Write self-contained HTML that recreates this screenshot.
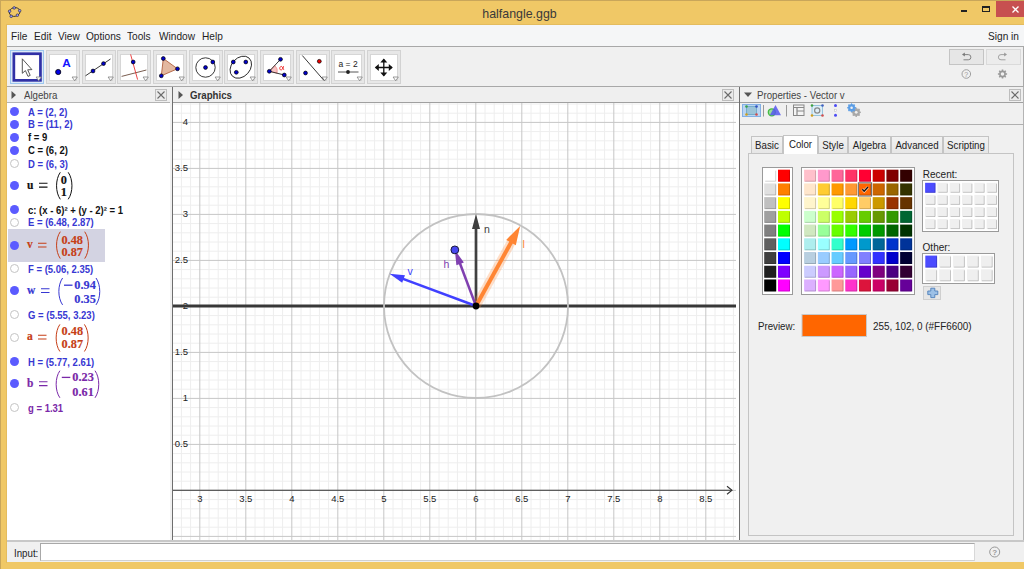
<!DOCTYPE html><html><head><meta charset="utf-8"><style>
*{margin:0;padding:0;box-sizing:border-box}
html,body{width:1024px;height:569px;overflow:hidden}
body{position:relative;background:#f0c866;font-family:"Liberation Sans",sans-serif;color:#000}
.a{position:absolute}
.t{position:absolute;white-space:nowrap;line-height:1}
.sx{transform-origin:0 0;transform:scaleX(.88)}
.menu{top:31px;font-size:11.5px;color:#1e1e1e}
.tb{position:absolute;top:50px;width:34px;height:34px;background:#e2e2e2;border:1px solid #d2d2d2}
.tb .in{position:absolute;left:3px;top:3px;width:26px;height:26px;background:#fff;border:1px solid #e4e4e4}
.tb svg{position:absolute;left:0;top:0}
.hdr{position:absolute;top:87px;height:16px;background:#efefef}
.alg{position:absolute;font-size:10.5px;font-weight:bold;line-height:1;white-space:nowrap}
.dot{position:absolute;left:10px;width:10px;height:10px;border-radius:50%}
.don{background:#5a5af5}
.doff{background:#fff;border:1px solid #c8c8c8}
</style></head><body>
<div class="a" style="left:0;top:0;width:1024px;height:1px;background:#c9a65a"></div>
<div class="a" style="left:0;top:0;width:1px;height:569px;background:#c9a65a"></div>
<div class="a" style="left:6px;top:24px;width:1018px;height:1px;background:#e4bc5e"></div>
<div class="a" style="left:6px;top:24px;width:1px;height:539px;background:#e4bc5e"></div>
<svg class="a" style="left:7px;top:5px" width="16" height="14"><ellipse cx="7.6" cy="7" rx="5.4" ry="4.4" transform="rotate(-10 7.6 7)" fill="none" stroke="#333" stroke-width="0.9"/><circle cx="7.2" cy="2.9" r="1.3" fill="#99f" stroke="#223" stroke-width="0.6"/><circle cx="12.7" cy="5.7" r="1.3" fill="#99f" stroke="#223" stroke-width="0.6"/><circle cx="10.4" cy="10.2" r="1.3" fill="#99f" stroke="#223" stroke-width="0.6"/><circle cx="4.2" cy="11.3" r="1.3" fill="#99f" stroke="#223" stroke-width="0.6"/><circle cx="2.6" cy="6.2" r="1.3" fill="#99f" stroke="#223" stroke-width="0.6"/></svg>
<div class="t" style="left:7.5px;top:7.6px;width:1024px;text-align:center;font-size:12.4px;color:#3a3a3a">halfangle.ggb</div>
<div class="a" style="left:961px;top:10px;width:6px;height:2px;background:#222"></div>
<div class="a" style="left:982px;top:6px;width:8px;height:6px;border:1px solid #222;border-top-width:2px"></div>
<div class="a" style="left:996px;top:1px;width:28px;height:16px;background:#c75050"></div>
<svg class="a" style="left:1011px;top:5px" width="9" height="9"><path d="M1.5 1.5L7.5 7.5M7.5 1.5L1.5 7.5" stroke="#fff" stroke-width="1.3"/></svg>
<div class="a" style="left:7px;top:25px;width:1017px;height:537px;background:#f0f0f0"></div>
<div class="a" style="left:7px;top:25px;width:1017px;height:21px;background:#f5f6f7"></div>
<div class="a" style="left:7px;top:46px;width:1017px;height:1px;background:#a8a8a8"></div>
<div class="t menu sx" style="left:11px">File</div>
<div class="t menu sx" style="left:34px">Edit</div>
<div class="t menu sx" style="left:58px">View</div>
<div class="t menu sx" style="left:86px">Options</div>
<div class="t menu sx" style="left:127px">Tools</div>
<div class="t menu sx" style="left:159px">Window</div>
<div class="t menu sx" style="left:202px">Help</div>
<div class="t menu sx" style="left:988px">Sign in</div>
<div class="a" style="left:7px;top:86px;width:1017px;height:1px;background:#a8a8a8"></div>
<div class="a" style="left:1023px;top:47px;width:1px;height:40px;background:#a8a8a8"></div>
<div class="a" style="left:10px;top:50px;width:34px;height:34px;background:#dbe9f8;border:1px solid #9cc6ee"></div>
<svg class="a" style="left:0;top:0" width="60" height="90"><rect x="13.85" y="53.75" width="26.6" height="26.6" fill="#fff" stroke="#3030a6" stroke-width="2.7"/></svg>
<div class="a" style="left:46px;top:50px;width:34px;height:34px;background:#e7e7e7;border:1px solid #d2d2d2"></div>
<div class="a" style="left:49px;top:54px;width:28px;height:27px;background:#fff;border:1px solid #d6d6d6"></div>
<div class="a" style="left:82px;top:50px;width:34px;height:34px;background:#e7e7e7;border:1px solid #d2d2d2"></div>
<div class="a" style="left:85px;top:54px;width:28px;height:27px;background:#fff;border:1px solid #d6d6d6"></div>
<div class="a" style="left:117px;top:50px;width:34px;height:34px;background:#e7e7e7;border:1px solid #d2d2d2"></div>
<div class="a" style="left:120px;top:54px;width:28px;height:27px;background:#fff;border:1px solid #d6d6d6"></div>
<div class="a" style="left:153px;top:50px;width:34px;height:34px;background:#e7e7e7;border:1px solid #d2d2d2"></div>
<div class="a" style="left:156px;top:54px;width:28px;height:27px;background:#fff;border:1px solid #d6d6d6"></div>
<div class="a" style="left:189px;top:50px;width:34px;height:34px;background:#e7e7e7;border:1px solid #d2d2d2"></div>
<div class="a" style="left:192px;top:54px;width:28px;height:27px;background:#fff;border:1px solid #d6d6d6"></div>
<div class="a" style="left:224px;top:50px;width:34px;height:34px;background:#e7e7e7;border:1px solid #d2d2d2"></div>
<div class="a" style="left:227px;top:54px;width:28px;height:27px;background:#fff;border:1px solid #d6d6d6"></div>
<div class="a" style="left:260px;top:50px;width:34px;height:34px;background:#e7e7e7;border:1px solid #d2d2d2"></div>
<div class="a" style="left:263px;top:54px;width:28px;height:27px;background:#fff;border:1px solid #d6d6d6"></div>
<div class="a" style="left:296px;top:50px;width:34px;height:34px;background:#e7e7e7;border:1px solid #d2d2d2"></div>
<div class="a" style="left:299px;top:54px;width:28px;height:27px;background:#fff;border:1px solid #d6d6d6"></div>
<div class="a" style="left:331px;top:50px;width:34px;height:34px;background:#e7e7e7;border:1px solid #d2d2d2"></div>
<div class="a" style="left:334px;top:54px;width:28px;height:27px;background:#fff;border:1px solid #d6d6d6"></div>
<div class="a" style="left:367px;top:50px;width:34px;height:34px;background:#e7e7e7;border:1px solid #d2d2d2"></div>
<div class="a" style="left:370px;top:54px;width:28px;height:27px;background:#fff;border:1px solid #d6d6d6"></div>
<svg class="a" style="left:0;top:0" width="420" height="90"><path d="M36.1 77L41.300000000000004 77L38.7 80.8Z" fill="#fff" stroke="#808080" stroke-width="0.8"/><path d="M72.10000000000001 77L77.3 77L74.7 80.8Z" fill="#fff" stroke="#808080" stroke-width="0.8"/><path d="M108.10000000000001 77L113.3 77L110.7 80.8Z" fill="#fff" stroke="#808080" stroke-width="0.8"/><path d="M143.1 77L148.29999999999998 77L145.7 80.8Z" fill="#fff" stroke="#808080" stroke-width="0.8"/><path d="M179.1 77L184.29999999999998 77L181.7 80.8Z" fill="#fff" stroke="#808080" stroke-width="0.8"/><path d="M215.1 77L220.29999999999998 77L217.7 80.8Z" fill="#fff" stroke="#808080" stroke-width="0.8"/><path d="M250.1 77L255.29999999999998 77L252.7 80.8Z" fill="#fff" stroke="#808080" stroke-width="0.8"/><path d="M286.09999999999997 77L291.3 77L288.7 80.8Z" fill="#fff" stroke="#808080" stroke-width="0.8"/><path d="M322.09999999999997 77L327.3 77L324.7 80.8Z" fill="#fff" stroke="#808080" stroke-width="0.8"/><path d="M357.09999999999997 77L362.3 77L359.7 80.8Z" fill="#fff" stroke="#808080" stroke-width="0.8"/><path d="M393.09999999999997 77L398.3 77L395.7 80.8Z" fill="#fff" stroke="#808080" stroke-width="0.8"/><path d="M22.3 58.8L22.3 73.3L25.4 70.6L28 76.4L30.2 75.4L27.7 69.8L31.9 69.6Z" fill="#fff" stroke="#444" stroke-width="0.9" stroke-linejoin="round"/><circle cx="58.2" cy="72" r="2.6" fill="#0000e6" stroke="#000" stroke-width="0.8"/><text x="62.3" y="67.4" font-size="11.8" font-weight="bold" fill="#1414ff" font-family="Liberation Sans">A</text><path d="M85.5 75.8L110.5 59" stroke="#222" stroke-width="0.9"/><circle cx="93" cy="71" r="1.9" fill="#00c" stroke="#000" stroke-width="0.7"/><circle cx="103.5" cy="63.6" r="1.9" fill="#00c" stroke="#000" stroke-width="0.7"/><path d="M121.6 76.4L146.4 70" stroke="#6b4b3b" stroke-width="0.9"/><path d="M130.6 54.4L137.6 79.6" stroke="#e83030" stroke-width="0.9"/><circle cx="133.2" cy="62" r="1.9" fill="#00c" stroke="#000" stroke-width="0.7"/><path d="M163.3 58.5L177.5 68.8L161.3 75.8Z" fill="#e3b8a0" stroke="#b06040" stroke-width="0.9"/><circle cx="163.3" cy="58.5" r="1.9" fill="#00c" stroke="#000" stroke-width="0.7"/><circle cx="177.5" cy="68.8" r="1.9" fill="#00c" stroke="#000" stroke-width="0.7"/><circle cx="161.3" cy="75.8" r="1.9" fill="#00c" stroke="#000" stroke-width="0.7"/><circle cx="205.5" cy="67.5" r="9.7" fill="none" stroke="#222" stroke-width="0.9"/><circle cx="205.5" cy="67.5" r="1.9" fill="#00c" stroke="#000" stroke-width="0.7"/><circle cx="212.8" cy="62" r="1.9" fill="#00c" stroke="#000" stroke-width="0.7"/><ellipse cx="240.8" cy="67.2" rx="12.3" ry="9.3" transform="rotate(-48 240.8 67.2)" fill="none" stroke="#222" stroke-width="0.9"/><circle cx="233.3" cy="62" r="1.9" fill="#00c" stroke="#000" stroke-width="0.7"/><circle cx="245.8" cy="62" r="1.9" fill="#00c" stroke="#000" stroke-width="0.7"/><circle cx="236.3" cy="72.3" r="1.9" fill="#00c" stroke="#000" stroke-width="0.7"/><path d="M269.3 71.3L274.8 65.4A8 8 0 0 1 277.1 73.2Z" fill="#f8c4c4" stroke="#e86060" stroke-width="0.5"/><path d="M280.5 59.3L269.3 71.3L284.3 75" fill="none" stroke="#222" stroke-width="0.9"/><path d="M283.6 66.2C282.9 69.3 281.9 69.9 281 69.9C279.9 69.9 279.6 68.8 279.8 67.9C280.1 66.7 281 66.2 281.7 66.5C282.5 66.9 283 69.2 284 69.9" fill="none" stroke="#ee2020" stroke-width="0.9"/><circle cx="269.3" cy="71.3" r="1.9" fill="#00c" stroke="#000" stroke-width="0.7"/><circle cx="280.5" cy="59.3" r="1.9" fill="#00c" stroke="#000" stroke-width="0.7"/><circle cx="284.3" cy="75" r="1.9" fill="#00c" stroke="#000" stroke-width="0.7"/><path d="M302.3 55.5L324 80.5" stroke="#222" stroke-width="0.9"/><circle cx="319.3" cy="61.3" r="1.9" fill="#e00" stroke="#000" stroke-width="0.7"/><circle cx="305.5" cy="73" r="1.9" fill="#00c" stroke="#000" stroke-width="0.7"/><text x="338.5" y="67.3" font-size="8.5" fill="#222" font-family="Liberation Sans">a = 2</text><path d="M338 72L358.5 72" stroke="#444" stroke-width="0.9"/><circle cx="348" cy="72" r="1.9" fill="#222"/><path d="M375.8 67.5L391.8 67.5M383.8 59.5L383.8 75.5" stroke="#111" stroke-width="1.3"/><path d="M374.8 67.5L378.8 64.0L378.8 71.0Z M392.8 67.5L388.8 64.0L388.8 71.0Z M383.8 58.5L380.3 62.5L387.3 62.5Z M383.8 76.5L380.3 72.5L387.3 72.5Z" fill="#111"/></svg>
<div class="a" style="left:949px;top:49px;width:35px;height:16px;background:#e6e6e6;border:1px solid #c4c4c4"></div>
<div class="a" style="left:986px;top:49px;width:35px;height:16px;background:#ececec;border:1px solid #dadada"></div>
<svg class="a" style="left:940px;top:45px" width="84" height="40"><path d="M24 9.6L28.3 9.6A2.6 2.6 0 0 1 28.3 14.8L23.5 14.8" fill="none" stroke="#777" stroke-width="0.9"/><path d="M22 9.6L24.8 7.6L24.8 11.6Z" fill="#777"/><path d="M65 9.6L61 9.6A2.6 2.6 0 0 0 61 14.8L65.5 14.8" fill="none" stroke="#999" stroke-width="0.9"/><path d="M67 9.6L64.2 7.6L64.2 11.6Z" fill="#999"/><circle cx="26.3" cy="29" r="4.3" fill="none" stroke="#a0a0a0" stroke-width="1"/><text x="24.3" y="31.5" font-size="7" font-weight="normal" fill="#999" font-family="Liberation Sans">?</text><circle cx="62.5" cy="29" r="2.6" fill="none" stroke="#999" stroke-width="1.6"/><path d="M65.30 29.00L67.10 29.00M64.48 30.98L65.75 32.25M62.50 31.80L62.50 33.60M60.52 30.98L59.25 32.25M59.70 29.00L57.90 29.00M60.52 27.02L59.25 25.75M62.50 26.20L62.50 24.40M64.48 27.02L65.75 25.75" stroke="#999" stroke-width="1.6"/></svg>
<div class="a" style="left:7px;top:87px;width:165px;height:16px;background:#efefef"></div>
<div class="a" style="left:7px;top:102px;width:163px;height:1px;background:#b4b4b4"></div>
<div class="a" style="left:7px;top:103px;width:163px;height:437px;background:#fff"></div>
<div class="a" style="left:172px;top:87px;width:1px;height:453px;background:#6e6e6e"></div>
<div class="a" style="left:173px;top:87px;width:566px;height:16px;background:#efefef"></div>
<div class="a" style="left:173px;top:102px;width:566px;height:1px;background:#a0a0a0"></div>
<div class="a" style="left:739px;top:87px;width:1px;height:453px;background:#6e6e6e"></div>
<div class="a" style="left:740px;top:87px;width:284px;height:16px;background:#efefef"></div>
<div class="a" style="left:740px;top:102px;width:284px;height:1px;background:#a0a0a0"></div>
<svg class="a" style="left:155px;top:89px" width="12" height="12"><rect x="0.5" y="0.5" width="11" height="11" fill="#eaeaea" stroke="#bdbdbd"/><path d="M2.5 2.5L9.5 9.5M9.5 2.5L2.5 9.5" stroke="#6a6a6a" stroke-width="1.1"/></svg>
<svg class="a" style="left:722px;top:89px" width="12" height="12"><rect x="0.5" y="0.5" width="11" height="11" fill="#eaeaea" stroke="#bdbdbd"/><path d="M2.5 2.5L9.5 9.5M9.5 2.5L2.5 9.5" stroke="#6a6a6a" stroke-width="1.1"/></svg>
<svg class="a" style="left:1009px;top:89px" width="12" height="12"><rect x="0.5" y="0.5" width="11" height="11" fill="#eaeaea" stroke="#bdbdbd"/><path d="M2.5 2.5L9.5 9.5M9.5 2.5L2.5 9.5" stroke="#6a6a6a" stroke-width="1.1"/></svg>
<div class="a" style="left:1023px;top:87px;width:1px;height:453px;background:#b4b4b4"></div>
<svg class="a" style="left:10px;top:90px" width="8" height="10"><path d="M1.5 1L6 5L1.5 9Z" fill="#555"/></svg>
<svg class="a" style="left:177px;top:90px" width="8" height="10"><path d="M1.5 1L6 5L1.5 9Z" fill="#555"/></svg>
<svg class="a" style="left:743px;top:91px" width="10" height="8"><path d="M1 1.5L9 1.5L5 6Z" fill="#555"/></svg>
<div class="t sx" style="left:24px;top:90px;font-size:11px;color:#444">Algebra</div>
<div class="t sx" style="left:190px;top:90px;font-size:11px;color:#333;font-weight:bold">Graphics</div>
<div class="t sx" style="left:757px;top:90px;font-size:11px;color:#444">Properties - Vector v</div>
<div class="a" style="left:7px;top:540px;width:1017px;height:2px;background:#c8c8c8"></div>
<div class="t" style="left:14.3px;top:547.6px;font-size:10.8px;color:#222;transform-origin:0 0;transform:scaleX(.9)">Input:</div>
<div class="a" style="left:40px;top:543px;width:935px;height:18px;background:#fff;border:1px solid #a8a8a8;border-right-color:#d8d8d8;border-bottom-color:#d0d0d0"></div>
<svg class="a" style="left:987px;top:545px" width="16" height="16"><circle cx="7.7" cy="7" r="5" fill="none" stroke="#999" stroke-width="1"/><text x="5.3" y="10" font-size="8" font-weight="bold" fill="#999" font-family="Liberation Sans">?</text></svg>
<div class="a" style="left:173px;top:103px;width:566px;height:437px;background:#fff"></div>
<svg class="a" style="left:173px;top:103px" width="563" height="437"><rect x="0" y="0" width="563" height="437" fill="#fff"/><path d="M8.40 0V437M17.60 0V437M36.00 0V437M45.20 0V437M54.40 0V437M63.60 0V437M82.00 0V437M91.20 0V437M100.40 0V437M109.60 0V437M128.00 0V437M137.20 0V437M146.40 0V437M155.60 0V437M174.00 0V437M183.20 0V437M192.40 0V437M201.60 0V437M220.00 0V437M229.20 0V437M238.40 0V437M247.60 0V437M266.00 0V437M275.20 0V437M284.40 0V437M293.60 0V437M312.00 0V437M321.20 0V437M330.40 0V437M339.60 0V437M358.00 0V437M367.20 0V437M376.40 0V437M385.60 0V437M404.00 0V437M413.20 0V437M422.40 0V437M431.60 0V437M450.00 0V437M459.20 0V437M468.40 0V437M477.60 0V437M496.00 0V437M505.20 0V437M514.40 0V437M523.60 0V437M542.00 0V437M551.20 0V437M560.40 0V437M0 424.20H563M0 415.00H563M0 405.80H563M0 396.60H563M0 378.20H563M0 369.00H563M0 359.80H563M0 350.60H563M0 332.20H563M0 323.00H563M0 313.80H563M0 304.60H563M0 286.20H563M0 277.00H563M0 267.80H563M0 258.60H563M0 240.20H563M0 231.00H563M0 221.80H563M0 212.60H563M0 194.20H563M0 185.00H563M0 175.80H563M0 166.60H563M0 148.20H563M0 139.00H563M0 129.80H563M0 120.60H563M0 102.20H563M0 93.00H563M0 83.80H563M0 74.60H563M0 56.20H563M0 47.00H563M0 37.80H563M0 28.60H563M0 10.20H563M0 1.00H563" stroke="#eeeeee" stroke-width="1"/><path d="M26.80 0V437M72.80 0V437M118.80 0V437M164.80 0V437M210.80 0V437M256.80 0V437M302.80 0V437M348.80 0V437M394.80 0V437M440.80 0V437M486.80 0V437M532.80 0V437M0 433.40H563M0 387.40H563M0 341.40H563M0 295.40H563M0 249.40H563M0 203.40H563M0 157.40H563M0 111.40H563M0 65.40H563M0 19.40H563" stroke="#c6c6c6" stroke-width="1"/><path d="M0 387.30H559" stroke="#3a3a3a" stroke-width="1.05"/><path d="M554 383.30L559 387.30L554 391.30" fill="none" stroke="#333" stroke-width="1.1"/><text x="26.80" y="399.00" font-size="9.5" text-anchor="middle" fill="#222" font-family="Liberation Sans">3</text><text x="72.80" y="399.00" font-size="9.5" text-anchor="middle" fill="#222" font-family="Liberation Sans">3.5</text><text x="118.80" y="399.00" font-size="9.5" text-anchor="middle" fill="#222" font-family="Liberation Sans">4</text><text x="164.80" y="399.00" font-size="9.5" text-anchor="middle" fill="#222" font-family="Liberation Sans">4.5</text><text x="210.80" y="399.00" font-size="9.5" text-anchor="middle" fill="#222" font-family="Liberation Sans">5</text><text x="256.80" y="399.00" font-size="9.5" text-anchor="middle" fill="#222" font-family="Liberation Sans">5.5</text><text x="302.80" y="399.00" font-size="9.5" text-anchor="middle" fill="#222" font-family="Liberation Sans">6</text><text x="348.80" y="399.00" font-size="9.5" text-anchor="middle" fill="#222" font-family="Liberation Sans">6.5</text><text x="394.80" y="399.00" font-size="9.5" text-anchor="middle" fill="#222" font-family="Liberation Sans">7</text><text x="440.80" y="399.00" font-size="9.5" text-anchor="middle" fill="#222" font-family="Liberation Sans">7.5</text><text x="486.80" y="399.00" font-size="9.5" text-anchor="middle" fill="#222" font-family="Liberation Sans">8</text><text x="532.80" y="399.00" font-size="9.5" text-anchor="middle" fill="#222" font-family="Liberation Sans">8.5</text><text x="15" y="21.60" font-size="9.5" text-anchor="end" fill="#222" font-family="Liberation Sans">4</text><text x="15" y="67.60" font-size="9.5" text-anchor="end" fill="#222" font-family="Liberation Sans">3.5</text><text x="15" y="113.60" font-size="9.5" text-anchor="end" fill="#222" font-family="Liberation Sans">3</text><text x="15" y="159.60" font-size="9.5" text-anchor="end" fill="#222" font-family="Liberation Sans">2.5</text><text x="15" y="205.60" font-size="9.5" text-anchor="end" fill="#222" font-family="Liberation Sans">2</text><text x="15" y="251.60" font-size="9.5" text-anchor="end" fill="#222" font-family="Liberation Sans">1.5</text><text x="15" y="297.60" font-size="9.5" text-anchor="end" fill="#222" font-family="Liberation Sans">1</text><text x="15" y="343.60" font-size="9.5" text-anchor="end" fill="#222" font-family="Liberation Sans">0.5</text><path d="M0 203.00H563" stroke="#383838" stroke-width="3"/><circle cx="303.00" cy="203.00" r="92" fill="none" stroke="#c2c2c2" stroke-width="1.8"/><path d="M303.00 203.00L303.00 124.00" stroke="#404040" stroke-width="2.7"/><path d="M303.00 111.00L307.00 126.00L299.00 126.00Z" fill="#404040"/><path d="M303.00 203.00L337.98 139.60" stroke="rgba(255,140,60,0.28)" stroke-width="9" stroke-linecap="butt"/><path d="M303.00 203.00L338.95 137.84" stroke="#ff8533" stroke-width="4"/><path d="M347.16 122.96L342.80 142.25L333.17 136.94Z" fill="#ff8533"/><path d="M303.00 203.00L228.70 175.34" stroke="#4040ff" stroke-width="2.5"/><path d="M216.52 170.80L231.97 172.29L229.18 179.78Z" fill="#4040ff"/><path d="M303.00 203.00L286.43 159.04" stroke="#8040b0" stroke-width="2.5"/><path d="M281.84 146.88L290.87 159.50L283.39 162.33Z" fill="#8040b0"/><circle cx="281.84" cy="146.88" r="3.9" fill="#4848f0" stroke="#1a1a3a" stroke-width="1"/><circle cx="303.00" cy="203.00" r="3.4" fill="#000"/><text x="311" y="130" font-size="10.5" fill="#404040" font-family="Liberation Sans">n</text><text x="349.5" y="144.5" font-size="10.5" fill="#ff8533" font-family="Liberation Sans">l</text><text x="270.5" y="165" font-size="10.5" fill="#8040b0" font-family="Liberation Sans">h</text><text x="234.5" y="172" font-size="10.5" fill="#4040ff" font-family="Liberation Sans">v</text></svg>
<div class="a" style="left:8px;top:229px;width:97px;height:32.5px;background:#d3d3e2"></div>
<div class="a" style="left:10.2px;top:106.9px;width:9.2px;height:9.2px;border-radius:50%;background:#5b5bff"></div>
<div class="t" style="left:27.5px;top:107.5px;font-size:10px;font-weight:bold;color:#3737d2;transform-origin:0 0;transform:scaleX(.95)">A = (2, 2)</div>
<div class="a" style="left:10.2px;top:119.6px;width:9.2px;height:9.2px;border-radius:50%;background:#5b5bff"></div>
<div class="t" style="left:27.5px;top:120.2px;font-size:10px;font-weight:bold;color:#3737d2;transform-origin:0 0;transform:scaleX(.95)">B = (11, 2)</div>
<div class="a" style="left:10.2px;top:132.7px;width:9.2px;height:9.2px;border-radius:50%;background:#5b5bff"></div>
<div class="t" style="left:27.5px;top:133.3px;font-size:10px;font-weight:bold;color:#111;transform-origin:0 0;transform:scaleX(.95)">f = 9</div>
<div class="a" style="left:10.2px;top:145.8px;width:9.2px;height:9.2px;border-radius:50%;background:#5b5bff"></div>
<div class="t" style="left:27.5px;top:146.4px;font-size:10px;font-weight:bold;color:#111;transform-origin:0 0;transform:scaleX(.95)">C = (6, 2)</div>
<div class="a" style="left:10.2px;top:159.0px;width:9.2px;height:9.2px;border-radius:50%;background:#fff;border:1px solid #c4c4c4"></div>
<div class="t" style="left:27.5px;top:159.6px;font-size:10px;font-weight:bold;color:#3737d2;transform-origin:0 0;transform:scaleX(.95)">D = (6, 3)</div>
<div class="a" style="left:10.2px;top:205.3px;width:9.2px;height:9.2px;border-radius:50%;background:#5b5bff"></div>
<div class="t" style="left:27.5px;top:205.9px;font-size:10px;font-weight:bold;color:#111;transform-origin:0 0;transform:scaleX(.95)">c: (x - 6)&#178; + (y - 2)&#178; = 1</div>
<div class="a" style="left:10.2px;top:217.7px;width:9.2px;height:9.2px;border-radius:50%;background:#fff;border:1px solid #c4c4c4"></div>
<div class="t" style="left:27.5px;top:218.3px;font-size:10px;font-weight:bold;color:#3737d2;transform-origin:0 0;transform:scaleX(.95)">E = (6.48, 2.87)</div>
<div class="a" style="left:10.2px;top:264.0px;width:9.2px;height:9.2px;border-radius:50%;background:#fff;border:1px solid #c4c4c4"></div>
<div class="t" style="left:27.5px;top:264.6px;font-size:10px;font-weight:bold;color:#3737d2;transform-origin:0 0;transform:scaleX(.95)">F = (5.06, 2.35)</div>
<div class="a" style="left:10.2px;top:310.0px;width:9.2px;height:9.2px;border-radius:50%;background:#fff;border:1px solid #c4c4c4"></div>
<div class="t" style="left:27.5px;top:310.6px;font-size:10px;font-weight:bold;color:#3737d2;transform-origin:0 0;transform:scaleX(.95)">G = (5.55, 3.23)</div>
<div class="a" style="left:10.2px;top:357.0px;width:9.2px;height:9.2px;border-radius:50%;background:#5b5bff"></div>
<div class="t" style="left:27.5px;top:357.6px;font-size:10px;font-weight:bold;color:#3737d2;transform-origin:0 0;transform:scaleX(.95)">H = (5.77, 2.61)</div>
<div class="a" style="left:10.2px;top:403.0px;width:9.2px;height:9.2px;border-radius:50%;background:#fff;border:1px solid #c4c4c4"></div>
<div class="t" style="left:27.5px;top:403.6px;font-size:10px;font-weight:bold;color:#7a28a8;transform-origin:0 0;transform:scaleX(.95)">g = 1.31</div>
<div class="a" style="left:10.2px;top:180.7px;width:9.2px;height:9.2px;border-radius:50%;background:#5b5bff"></div>
<div class="t" style="left:27px;top:179.5px;font-family:Liberation Serif;font-size:11.5px;font-weight:bold;-webkit-text-stroke:0.2px #111;color:#111">u</div>
<svg class="a" style="left:0;top:0;overflow:visible" width="1" height="1"><path d="M39 183.3H47.5M39 187.1H47.5" stroke="#111" stroke-width="1.1"/><path d="M60.3 172.3C55.3 179.3 55.3 192.3 60.3 199.3" fill="none" stroke="#111" stroke-width="1"/><path d="M68.2 172.3C73.2 179.3 73.2 192.3 68.2 199.3" fill="none" stroke="#111" stroke-width="1"/></svg>
<div class="t" style="left:6.799999999999997px;width:60px;text-align:right;top:173.6px;font-family:Liberation Serif;font-size:12.3px;font-weight:bold;-webkit-text-stroke:0.15px #111;color:#111">0</div>
<div class="t" style="left:6.799999999999997px;width:60px;text-align:right;top:186.3px;font-family:Liberation Serif;font-size:12.3px;font-weight:bold;-webkit-text-stroke:0.15px #111;color:#111">1</div>
<div class="a" style="left:10.2px;top:240.6px;width:9.2px;height:9.2px;border-radius:50%;background:#5b5bff"></div>
<div class="t" style="left:27px;top:239.4px;font-family:Liberation Serif;font-size:11.5px;font-weight:bold;-webkit-text-stroke:0.2px #c63e16;color:#c63e16">v</div>
<svg class="a" style="left:0;top:0;overflow:visible" width="1" height="1"><path d="M38 243.2H46.5M38 247.0H46.5" stroke="#c63e16" stroke-width="1.1"/><path d="M60.3 231.7C55.3 238.7 55.3 251.60000000000002 60.3 258.6" fill="none" stroke="#c63e16" stroke-width="1"/><path d="M84.7 231.7C89.7 238.7 89.7 251.60000000000002 84.7 258.6" fill="none" stroke="#c63e16" stroke-width="1"/></svg>
<div class="t" style="left:23px;width:60px;text-align:right;top:233.7px;font-family:Liberation Serif;font-size:12.3px;font-weight:bold;-webkit-text-stroke:0.15px #c63e16;color:#c63e16">0.48</div>
<div class="t" style="left:23px;width:60px;text-align:right;top:246.0px;font-family:Liberation Serif;font-size:12.3px;font-weight:bold;-webkit-text-stroke:0.15px #c63e16;color:#c63e16">0.87</div>
<div class="a" style="left:10.2px;top:286.1px;width:9.2px;height:9.2px;border-radius:50%;background:#5b5bff"></div>
<div class="t" style="left:27px;top:284.9px;font-family:Liberation Serif;font-size:11.5px;font-weight:bold;-webkit-text-stroke:0.2px #3737d2;color:#3737d2">w</div>
<svg class="a" style="left:0;top:0;overflow:visible" width="1" height="1"><path d="M41 288.7H49.5M41 292.5H49.5" stroke="#3737d2" stroke-width="1.1"/><path d="M62.599999999999994 278C57.599999999999994 285 57.599999999999994 297.9 62.599999999999994 304.9" fill="none" stroke="#3737d2" stroke-width="1"/><path d="M96.0 278C101.0 285 101.0 297.9 96.0 304.9" fill="none" stroke="#3737d2" stroke-width="1"/><path d="M64 285.2H72.5" stroke="#3737d2" stroke-width="1.3"/></svg>
<div class="t" style="left:35.8px;width:60px;text-align:right;top:278.8px;font-family:Liberation Serif;font-size:12.3px;font-weight:bold;-webkit-text-stroke:0.15px #3737d2;color:#3737d2">0.94</div>
<div class="t" style="left:35.8px;width:60px;text-align:right;top:292.6px;font-family:Liberation Serif;font-size:12.3px;font-weight:bold;-webkit-text-stroke:0.15px #3737d2;color:#3737d2">0.35</div>
<div class="a" style="left:10.2px;top:332.6px;width:9.2px;height:9.2px;border-radius:50%;background:#fff;border:1px solid #c4c4c4"></div>
<div class="t" style="left:27px;top:331.4px;font-family:Liberation Serif;font-size:11.5px;font-weight:bold;-webkit-text-stroke:0.2px #c63e16;color:#c63e16">a</div>
<svg class="a" style="left:0;top:0;overflow:visible" width="1" height="1"><path d="M38 335.2H46.5M38 339.0H46.5" stroke="#c63e16" stroke-width="1.1"/><path d="M59.9 324.4C54.9 331.4 54.9 344.5 59.9 351.5" fill="none" stroke="#c63e16" stroke-width="1"/><path d="M84.4 324.4C89.4 331.4 89.4 344.5 84.4 351.5" fill="none" stroke="#c63e16" stroke-width="1"/></svg>
<div class="t" style="left:23.099999999999994px;width:60px;text-align:right;top:325.0px;font-family:Liberation Serif;font-size:12.3px;font-weight:bold;-webkit-text-stroke:0.15px #c63e16;color:#c63e16">0.48</div>
<div class="t" style="left:23.099999999999994px;width:60px;text-align:right;top:337.7px;font-family:Liberation Serif;font-size:12.3px;font-weight:bold;-webkit-text-stroke:0.15px #c63e16;color:#c63e16">0.87</div>
<div class="a" style="left:10.2px;top:379.2px;width:9.2px;height:9.2px;border-radius:50%;background:#5b5bff"></div>
<div class="t" style="left:27px;top:378.0px;font-family:Liberation Serif;font-size:11.5px;font-weight:bold;-webkit-text-stroke:0.2px #7a28a8;color:#7a28a8">b</div>
<svg class="a" style="left:0;top:0;overflow:visible" width="1" height="1"><path d="M39 381.8H47.5M39 385.6H47.5" stroke="#7a28a8" stroke-width="1.1"/><path d="M59.9 370.7C54.9 377.7 54.9 390.8 59.9 397.8" fill="none" stroke="#7a28a8" stroke-width="1"/><path d="M95.0 370.7C100.0 377.7 100.0 390.8 95.0 397.8" fill="none" stroke="#7a28a8" stroke-width="1"/><path d="M61.8 377.4H70.3" stroke="#7a28a8" stroke-width="1.3"/></svg>
<div class="t" style="left:33.900000000000006px;width:60px;text-align:right;top:371.3px;font-family:Liberation Serif;font-size:12.3px;font-weight:bold;-webkit-text-stroke:0.15px #7a28a8;color:#7a28a8">0.23</div>
<div class="t" style="left:33.900000000000006px;width:60px;text-align:right;top:385.5px;font-family:Liberation Serif;font-size:12.3px;font-weight:bold;-webkit-text-stroke:0.15px #7a28a8;color:#7a28a8">0.61</div>
<div class="a" style="left:740px;top:124px;width:284px;height:1px;background:#b0b0b0"></div>
<svg class="a" style="left:0;top:0;overflow:visible" width="1" height="1"><rect x="742.5" y="104.5" width="18" height="12" fill="#bad5f2" stroke="#82b0e6" stroke-width="1"/><rect x="746.5" y="106.5" width="10" height="8" fill="#9cc4d8" stroke="#5f9fbf" stroke-width="0.7"/><circle cx="746.5" cy="106.5" r="1.3" fill="#3aa04a"/><circle cx="756.5" cy="106.5" r="1.3" fill="#3050c0"/><circle cx="746.5" cy="114.5" r="1.3" fill="#d0a020"/><circle cx="756.5" cy="114.5" r="1.3" fill="#d05050"/><path d="M763.5 105V116.5M786.5 105V116.5" stroke="#999" stroke-width="1"/><circle cx="771.8" cy="112.3" r="3.5" fill="#9d9" stroke="#4b4" stroke-width="1.3"/><path d="M775.5 105L781 115.3L769.8 115.3Z" fill="#5656ee" fill-opacity="0.85"/><rect x="793.5" y="105" width="10.5" height="10.5" fill="#f4f4f4" stroke="#888" stroke-width="1"/><path d="M793.5 107.5H804M797 107.5V115.5M797 111H804" stroke="#888" stroke-width="1.2"/><rect x="812" y="105.5" width="10.5" height="10" fill="#ddeef8" stroke="#80b8d8" stroke-width="0.8"/><circle cx="817.2" cy="110.5" r="2.6" fill="none" stroke="#888" stroke-width="1.2"/><circle cx="812" cy="105.5" r="1.3" fill="#40a040"/><circle cx="822.5" cy="105.5" r="1.3" fill="#4060c0"/><circle cx="812" cy="115.5" r="1.3" fill="#d0a020"/><circle cx="822.5" cy="115.5" r="1.3" fill="#d05050"/><circle cx="835.5" cy="105.5" r="1.5" fill="#4c4cf4"/><rect x="834.5" y="109.2" width="2" height="2" fill="#fff" stroke="#bbb" stroke-width="0.5"/><circle cx="835.5" cy="115.3" r="1.5" fill="#4c4cf4"/><path d="M860.80 112.30L859.25 113.56L859.45 115.55L857.46 115.35L856.20 116.90L854.94 115.35L852.95 115.55L853.15 113.56L851.60 112.30L853.15 111.04L852.95 109.05L854.94 109.25L856.20 107.70L857.46 109.25L859.45 109.05L859.25 111.04Z" fill="#a8a8a8" stroke="#a8a8a8" stroke-width="0.8" stroke-linejoin="round"/><circle cx="856.2" cy="112.3" r="1.4" fill="#f0f0f0"/><path d="M855.90 107.80L854.46 108.99L854.64 110.84L852.79 110.66L851.60 112.10L850.41 110.66L848.56 110.84L848.74 108.99L847.30 107.80L848.74 106.61L848.56 104.76L850.41 104.94L851.60 103.50L852.79 104.94L854.64 104.76L854.46 106.61Z" fill="#5c9ee6" stroke="#5c9ee6" stroke-width="0.8" stroke-linejoin="round"/><circle cx="851.6" cy="107.8" r="1.3" fill="#f0f0f0"/></svg>
<div class="a" style="left:748px;top:152.5px;width:266px;height:383px;border:1px solid #c4c4c4;background:#f0f0f0"></div>
<div class="a" style="left:750.5px;top:136px;width:32.0px;height:16.5px;background:linear-gradient(#f2f2f2,#e6e6e6);border:1px solid #c4c4c4;border-bottom:none"></div>
<div class="t" style="left:750.5px;width:32.0px;text-align:center;top:140px;font-size:10.8px;color:#222;transform:scaleX(.9)">Basic</div>
<div class="a" style="left:782.5px;top:135px;width:35.0px;height:18.5px;background:#fff;border:1px solid #c4c4c4;border-bottom:none"></div>
<div class="t" style="left:782.5px;width:35.0px;text-align:center;top:138.6px;font-size:10.8px;color:#222;transform:scaleX(.9)">Color</div>
<div class="a" style="left:817.5px;top:136px;width:30.0px;height:16.5px;background:linear-gradient(#f2f2f2,#e6e6e6);border:1px solid #c4c4c4;border-bottom:none"></div>
<div class="t" style="left:817.5px;width:30.0px;text-align:center;top:140px;font-size:10.8px;color:#222;transform:scaleX(.9)">Style</div>
<div class="a" style="left:847.5px;top:136px;width:43.0px;height:16.5px;background:linear-gradient(#f2f2f2,#e6e6e6);border:1px solid #c4c4c4;border-bottom:none"></div>
<div class="t" style="left:847.5px;width:43.0px;text-align:center;top:140px;font-size:10.8px;color:#222;transform:scaleX(.9)">Algebra</div>
<div class="a" style="left:890.5px;top:136px;width:52.0px;height:16.5px;background:linear-gradient(#f2f2f2,#e6e6e6);border:1px solid #c4c4c4;border-bottom:none"></div>
<div class="t" style="left:890.5px;width:52.0px;text-align:center;top:140px;font-size:10.8px;color:#222;transform:scaleX(.9)">Advanced</div>
<div class="a" style="left:942.5px;top:136px;width:46.0px;height:16.5px;background:linear-gradient(#f2f2f2,#e6e6e6);border:1px solid #c4c4c4;border-bottom:none"></div>
<div class="t" style="left:942.5px;width:46.0px;text-align:center;top:140px;font-size:10.8px;color:#222;transform:scaleX(.9)">Scripting</div>
<svg class="a" style="left:0;top:0;overflow:visible" width="1" height="1"><rect x="762.5" y="167.5" width="30" height="127" fill="#fff" stroke="#9a9a9a" stroke-width="1"/><rect x="801.5" y="167.5" width="113" height="127" fill="#fff" stroke="#9a9a9a" stroke-width="1"/><rect x="764.20" y="169.70" width="12" height="12" fill="#ffffff"/><path d="M775.70 170.70V181.20H765.20" fill="none" stroke="#000" stroke-opacity="0.18" stroke-width="1"/><rect x="778.00" y="169.70" width="12" height="12" fill="#ff0000"/><path d="M789.50 170.70V181.20H779.00" fill="none" stroke="#000" stroke-opacity="0.18" stroke-width="1"/><rect x="764.20" y="183.42" width="12" height="12" fill="#e0e0e0"/><path d="M775.70 184.42V194.92H765.20" fill="none" stroke="#000" stroke-opacity="0.18" stroke-width="1"/><rect x="778.00" y="183.42" width="12" height="12" fill="#ff7f00"/><path d="M789.50 184.42V194.92H779.00" fill="none" stroke="#000" stroke-opacity="0.18" stroke-width="1"/><rect x="764.20" y="197.14" width="12" height="12" fill="#c0c0c0"/><path d="M775.70 198.14V208.64H765.20" fill="none" stroke="#000" stroke-opacity="0.18" stroke-width="1"/><rect x="778.00" y="197.14" width="12" height="12" fill="#ffff00"/><path d="M789.50 198.14V208.64H779.00" fill="none" stroke="#000" stroke-opacity="0.18" stroke-width="1"/><rect x="764.20" y="210.86" width="12" height="12" fill="#a0a0a0"/><path d="M775.70 211.86V222.36H765.20" fill="none" stroke="#000" stroke-opacity="0.18" stroke-width="1"/><rect x="778.00" y="210.86" width="12" height="12" fill="#bfff00"/><path d="M789.50 211.86V222.36H779.00" fill="none" stroke="#000" stroke-opacity="0.18" stroke-width="1"/><rect x="764.20" y="224.58" width="12" height="12" fill="#808080"/><path d="M775.70 225.58V236.08H765.20" fill="none" stroke="#000" stroke-opacity="0.18" stroke-width="1"/><rect x="778.00" y="224.58" width="12" height="12" fill="#00ff00"/><path d="M789.50 225.58V236.08H779.00" fill="none" stroke="#000" stroke-opacity="0.18" stroke-width="1"/><rect x="764.20" y="238.30" width="12" height="12" fill="#606060"/><path d="M775.70 239.30V249.80H765.20" fill="none" stroke="#000" stroke-opacity="0.18" stroke-width="1"/><rect x="778.00" y="238.30" width="12" height="12" fill="#00ffff"/><path d="M789.50 239.30V249.80H779.00" fill="none" stroke="#000" stroke-opacity="0.18" stroke-width="1"/><rect x="764.20" y="252.02" width="12" height="12" fill="#404040"/><path d="M775.70 253.02V263.52H765.20" fill="none" stroke="#000" stroke-opacity="0.18" stroke-width="1"/><rect x="778.00" y="252.02" width="12" height="12" fill="#0000ff"/><path d="M789.50 253.02V263.52H779.00" fill="none" stroke="#000" stroke-opacity="0.18" stroke-width="1"/><rect x="764.20" y="265.74" width="12" height="12" fill="#202020"/><path d="M775.70 266.74V277.24H765.20" fill="none" stroke="#000" stroke-opacity="0.18" stroke-width="1"/><rect x="778.00" y="265.74" width="12" height="12" fill="#7f00ff"/><path d="M789.50 266.74V277.24H779.00" fill="none" stroke="#000" stroke-opacity="0.18" stroke-width="1"/><rect x="764.20" y="279.46" width="12" height="12" fill="#000000"/><path d="M775.70 280.46V290.96H765.20" fill="none" stroke="#000" stroke-opacity="0.18" stroke-width="1"/><rect x="778.00" y="279.46" width="12" height="12" fill="#ff00ff"/><path d="M789.50 280.46V290.96H779.00" fill="none" stroke="#000" stroke-opacity="0.18" stroke-width="1"/><rect x="804.10" y="169.70" width="12" height="12" fill="#ffc0cb"/><path d="M815.60 170.70V181.20H805.10" fill="none" stroke="#000" stroke-opacity="0.18" stroke-width="1"/><rect x="817.82" y="169.70" width="12" height="12" fill="#ff99cc"/><path d="M829.32 170.70V181.20H818.82" fill="none" stroke="#000" stroke-opacity="0.18" stroke-width="1"/><rect x="831.54" y="169.70" width="12" height="12" fill="#ff6699"/><path d="M843.04 170.70V181.20H832.54" fill="none" stroke="#000" stroke-opacity="0.18" stroke-width="1"/><rect x="845.26" y="169.70" width="12" height="12" fill="#ff3366"/><path d="M856.76 170.70V181.20H846.26" fill="none" stroke="#000" stroke-opacity="0.18" stroke-width="1"/><rect x="858.98" y="169.70" width="12" height="12" fill="#ff0033"/><path d="M870.48 170.70V181.20H859.98" fill="none" stroke="#000" stroke-opacity="0.18" stroke-width="1"/><rect x="872.70" y="169.70" width="12" height="12" fill="#cc0000"/><path d="M884.20 170.70V181.20H873.70" fill="none" stroke="#000" stroke-opacity="0.18" stroke-width="1"/><rect x="886.42" y="169.70" width="12" height="12" fill="#800000"/><path d="M897.92 170.70V181.20H887.42" fill="none" stroke="#000" stroke-opacity="0.18" stroke-width="1"/><rect x="900.14" y="169.70" width="12" height="12" fill="#330000"/><path d="M911.64 170.70V181.20H901.14" fill="none" stroke="#000" stroke-opacity="0.18" stroke-width="1"/><rect x="804.10" y="183.42" width="12" height="12" fill="#ffe6cc"/><path d="M815.60 184.42V194.92H805.10" fill="none" stroke="#000" stroke-opacity="0.18" stroke-width="1"/><rect x="817.82" y="183.42" width="12" height="12" fill="#ffcc33"/><path d="M829.32 184.42V194.92H818.82" fill="none" stroke="#000" stroke-opacity="0.18" stroke-width="1"/><rect x="831.54" y="183.42" width="12" height="12" fill="#ff9900"/><path d="M843.04 184.42V194.92H832.54" fill="none" stroke="#000" stroke-opacity="0.18" stroke-width="1"/><rect x="845.26" y="183.42" width="12" height="12" fill="#ff9933"/><path d="M856.76 184.42V194.92H846.26" fill="none" stroke="#000" stroke-opacity="0.18" stroke-width="1"/><rect x="858.98" y="183.42" width="12" height="12" fill="#ff6600"/><path d="M870.48 184.42V194.92H859.98" fill="none" stroke="#000" stroke-opacity="0.18" stroke-width="1"/><rect x="872.70" y="183.42" width="12" height="12" fill="#cc6600"/><path d="M884.20 184.42V194.92H873.70" fill="none" stroke="#000" stroke-opacity="0.18" stroke-width="1"/><rect x="886.42" y="183.42" width="12" height="12" fill="#996600"/><path d="M897.92 184.42V194.92H887.42" fill="none" stroke="#000" stroke-opacity="0.18" stroke-width="1"/><rect x="900.14" y="183.42" width="12" height="12" fill="#333300"/><path d="M911.64 184.42V194.92H901.14" fill="none" stroke="#000" stroke-opacity="0.18" stroke-width="1"/><rect x="804.10" y="197.14" width="12" height="12" fill="#fff5cc"/><path d="M815.60 198.14V208.64H805.10" fill="none" stroke="#000" stroke-opacity="0.18" stroke-width="1"/><rect x="817.82" y="197.14" width="12" height="12" fill="#ffff99"/><path d="M829.32 198.14V208.64H818.82" fill="none" stroke="#000" stroke-opacity="0.18" stroke-width="1"/><rect x="831.54" y="197.14" width="12" height="12" fill="#ffff66"/><path d="M843.04 198.14V208.64H832.54" fill="none" stroke="#000" stroke-opacity="0.18" stroke-width="1"/><rect x="845.26" y="197.14" width="12" height="12" fill="#ffd700"/><path d="M856.76 198.14V208.64H846.26" fill="none" stroke="#000" stroke-opacity="0.18" stroke-width="1"/><rect x="858.98" y="197.14" width="12" height="12" fill="#ffcc66"/><path d="M870.48 198.14V208.64H859.98" fill="none" stroke="#000" stroke-opacity="0.18" stroke-width="1"/><rect x="872.70" y="197.14" width="12" height="12" fill="#cc9900"/><path d="M884.20 198.14V208.64H873.70" fill="none" stroke="#000" stroke-opacity="0.18" stroke-width="1"/><rect x="886.42" y="197.14" width="12" height="12" fill="#993300"/><path d="M897.92 198.14V208.64H887.42" fill="none" stroke="#000" stroke-opacity="0.18" stroke-width="1"/><rect x="900.14" y="197.14" width="12" height="12" fill="#663300"/><path d="M911.64 198.14V208.64H901.14" fill="none" stroke="#000" stroke-opacity="0.18" stroke-width="1"/><rect x="804.10" y="210.86" width="12" height="12" fill="#ccffcc"/><path d="M815.60 211.86V222.36H805.10" fill="none" stroke="#000" stroke-opacity="0.18" stroke-width="1"/><rect x="817.82" y="210.86" width="12" height="12" fill="#ccff66"/><path d="M829.32 211.86V222.36H818.82" fill="none" stroke="#000" stroke-opacity="0.18" stroke-width="1"/><rect x="831.54" y="210.86" width="12" height="12" fill="#99ff00"/><path d="M843.04 211.86V222.36H832.54" fill="none" stroke="#000" stroke-opacity="0.18" stroke-width="1"/><rect x="845.26" y="210.86" width="12" height="12" fill="#99cc00"/><path d="M856.76 211.86V222.36H846.26" fill="none" stroke="#000" stroke-opacity="0.18" stroke-width="1"/><rect x="858.98" y="210.86" width="12" height="12" fill="#66cc00"/><path d="M870.48 211.86V222.36H859.98" fill="none" stroke="#000" stroke-opacity="0.18" stroke-width="1"/><rect x="872.70" y="210.86" width="12" height="12" fill="#669900"/><path d="M884.20 211.86V222.36H873.70" fill="none" stroke="#000" stroke-opacity="0.18" stroke-width="1"/><rect x="886.42" y="210.86" width="12" height="12" fill="#339900"/><path d="M897.92 211.86V222.36H887.42" fill="none" stroke="#000" stroke-opacity="0.18" stroke-width="1"/><rect x="900.14" y="210.86" width="12" height="12" fill="#006633"/><path d="M911.64 211.86V222.36H901.14" fill="none" stroke="#000" stroke-opacity="0.18" stroke-width="1"/><rect x="804.10" y="224.58" width="12" height="12" fill="#d0e8c0"/><path d="M815.60 225.58V236.08H805.10" fill="none" stroke="#000" stroke-opacity="0.18" stroke-width="1"/><rect x="817.82" y="224.58" width="12" height="12" fill="#99ff99"/><path d="M829.32 225.58V236.08H818.82" fill="none" stroke="#000" stroke-opacity="0.18" stroke-width="1"/><rect x="831.54" y="224.58" width="12" height="12" fill="#66ff00"/><path d="M843.04 225.58V236.08H832.54" fill="none" stroke="#000" stroke-opacity="0.18" stroke-width="1"/><rect x="845.26" y="224.58" width="12" height="12" fill="#33ff00"/><path d="M856.76 225.58V236.08H846.26" fill="none" stroke="#000" stroke-opacity="0.18" stroke-width="1"/><rect x="858.98" y="224.58" width="12" height="12" fill="#00cc00"/><path d="M870.48 225.58V236.08H859.98" fill="none" stroke="#000" stroke-opacity="0.18" stroke-width="1"/><rect x="872.70" y="224.58" width="12" height="12" fill="#009900"/><path d="M884.20 225.58V236.08H873.70" fill="none" stroke="#000" stroke-opacity="0.18" stroke-width="1"/><rect x="886.42" y="224.58" width="12" height="12" fill="#006600"/><path d="M897.92 225.58V236.08H887.42" fill="none" stroke="#000" stroke-opacity="0.18" stroke-width="1"/><rect x="900.14" y="224.58" width="12" height="12" fill="#003300"/><path d="M911.64 225.58V236.08H901.14" fill="none" stroke="#000" stroke-opacity="0.18" stroke-width="1"/><rect x="804.10" y="238.30" width="12" height="12" fill="#aeeeee"/><path d="M815.60 239.30V249.80H805.10" fill="none" stroke="#000" stroke-opacity="0.18" stroke-width="1"/><rect x="817.82" y="238.30" width="12" height="12" fill="#99ffff"/><path d="M829.32 239.30V249.80H818.82" fill="none" stroke="#000" stroke-opacity="0.18" stroke-width="1"/><rect x="831.54" y="238.30" width="12" height="12" fill="#33ffcc"/><path d="M843.04 239.30V249.80H832.54" fill="none" stroke="#000" stroke-opacity="0.18" stroke-width="1"/><rect x="845.26" y="238.30" width="12" height="12" fill="#0099ff"/><path d="M856.76 239.30V249.80H846.26" fill="none" stroke="#000" stroke-opacity="0.18" stroke-width="1"/><rect x="858.98" y="238.30" width="12" height="12" fill="#0099cc"/><path d="M870.48 239.30V249.80H859.98" fill="none" stroke="#000" stroke-opacity="0.18" stroke-width="1"/><rect x="872.70" y="238.30" width="12" height="12" fill="#006699"/><path d="M884.20 239.30V249.80H873.70" fill="none" stroke="#000" stroke-opacity="0.18" stroke-width="1"/><rect x="886.42" y="238.30" width="12" height="12" fill="#0033cc"/><path d="M897.92 239.30V249.80H887.42" fill="none" stroke="#000" stroke-opacity="0.18" stroke-width="1"/><rect x="900.14" y="238.30" width="12" height="12" fill="#003399"/><path d="M911.64 239.30V249.80H901.14" fill="none" stroke="#000" stroke-opacity="0.18" stroke-width="1"/><rect x="804.10" y="252.02" width="12" height="12" fill="#b8cfe0"/><path d="M815.60 253.02V263.52H805.10" fill="none" stroke="#000" stroke-opacity="0.18" stroke-width="1"/><rect x="817.82" y="252.02" width="12" height="12" fill="#99ccff"/><path d="M829.32 253.02V263.52H818.82" fill="none" stroke="#000" stroke-opacity="0.18" stroke-width="1"/><rect x="831.54" y="252.02" width="12" height="12" fill="#66ccff"/><path d="M843.04 253.02V263.52H832.54" fill="none" stroke="#000" stroke-opacity="0.18" stroke-width="1"/><rect x="845.26" y="252.02" width="12" height="12" fill="#6699ff"/><path d="M856.76 253.02V263.52H846.26" fill="none" stroke="#000" stroke-opacity="0.18" stroke-width="1"/><rect x="858.98" y="252.02" width="12" height="12" fill="#8080ff"/><path d="M870.48 253.02V263.52H859.98" fill="none" stroke="#000" stroke-opacity="0.18" stroke-width="1"/><rect x="872.70" y="252.02" width="12" height="12" fill="#3333ff"/><path d="M884.20 253.02V263.52H873.70" fill="none" stroke="#000" stroke-opacity="0.18" stroke-width="1"/><rect x="886.42" y="252.02" width="12" height="12" fill="#0000cc"/><path d="M897.92 253.02V263.52H887.42" fill="none" stroke="#000" stroke-opacity="0.18" stroke-width="1"/><rect x="900.14" y="252.02" width="12" height="12" fill="#000033"/><path d="M911.64 253.02V263.52H901.14" fill="none" stroke="#000" stroke-opacity="0.18" stroke-width="1"/><rect x="804.10" y="265.74" width="12" height="12" fill="#ccccff"/><path d="M815.60 266.74V277.24H805.10" fill="none" stroke="#000" stroke-opacity="0.18" stroke-width="1"/><rect x="817.82" y="265.74" width="12" height="12" fill="#cc99ff"/><path d="M829.32 266.74V277.24H818.82" fill="none" stroke="#000" stroke-opacity="0.18" stroke-width="1"/><rect x="831.54" y="265.74" width="12" height="12" fill="#cc66ff"/><path d="M843.04 266.74V277.24H832.54" fill="none" stroke="#000" stroke-opacity="0.18" stroke-width="1"/><rect x="845.26" y="265.74" width="12" height="12" fill="#9966ff"/><path d="M856.76 266.74V277.24H846.26" fill="none" stroke="#000" stroke-opacity="0.18" stroke-width="1"/><rect x="858.98" y="265.74" width="12" height="12" fill="#6600cc"/><path d="M870.48 266.74V277.24H859.98" fill="none" stroke="#000" stroke-opacity="0.18" stroke-width="1"/><rect x="872.70" y="265.74" width="12" height="12" fill="#800080"/><path d="M884.20 266.74V277.24H873.70" fill="none" stroke="#000" stroke-opacity="0.18" stroke-width="1"/><rect x="886.42" y="265.74" width="12" height="12" fill="#4b0082"/><path d="M897.92 266.74V277.24H887.42" fill="none" stroke="#000" stroke-opacity="0.18" stroke-width="1"/><rect x="900.14" y="265.74" width="12" height="12" fill="#330033"/><path d="M911.64 266.74V277.24H901.14" fill="none" stroke="#000" stroke-opacity="0.18" stroke-width="1"/><rect x="804.10" y="279.46" width="12" height="12" fill="#dcb0ff"/><path d="M815.60 280.46V290.96H805.10" fill="none" stroke="#000" stroke-opacity="0.18" stroke-width="1"/><rect x="817.82" y="279.46" width="12" height="12" fill="#ff99ff"/><path d="M829.32 280.46V290.96H818.82" fill="none" stroke="#000" stroke-opacity="0.18" stroke-width="1"/><rect x="831.54" y="279.46" width="12" height="12" fill="#ff9999"/><path d="M843.04 280.46V290.96H832.54" fill="none" stroke="#000" stroke-opacity="0.18" stroke-width="1"/><rect x="845.26" y="279.46" width="12" height="12" fill="#ff33cc"/><path d="M856.76 280.46V290.96H846.26" fill="none" stroke="#000" stroke-opacity="0.18" stroke-width="1"/><rect x="858.98" y="279.46" width="12" height="12" fill="#dc143c"/><path d="M870.48 280.46V290.96H859.98" fill="none" stroke="#000" stroke-opacity="0.18" stroke-width="1"/><rect x="872.70" y="279.46" width="12" height="12" fill="#cc0066"/><path d="M884.20 280.46V290.96H873.70" fill="none" stroke="#000" stroke-opacity="0.18" stroke-width="1"/><rect x="886.42" y="279.46" width="12" height="12" fill="#990033"/><path d="M897.92 280.46V290.96H887.42" fill="none" stroke="#000" stroke-opacity="0.18" stroke-width="1"/><rect x="900.14" y="279.46" width="12" height="12" fill="#660099"/><path d="M911.64 280.46V290.96H901.14" fill="none" stroke="#000" stroke-opacity="0.18" stroke-width="1"/><rect x="858.38" y="182.82" width="13.2" height="13.2" fill="none" stroke="#666" stroke-width="1"/><path d="M862.28 189.22L864.18 191.22L867.98 187.02" fill="none" stroke="#fff" stroke-opacity="0.7" stroke-width="2.6"/><path d="M862.28 189.22L864.18 191.22L867.98 187.02" fill="none" stroke="#111" stroke-width="1.4"/><rect x="922.5" y="180.5" width="76" height="51" fill="#fff" stroke="#9a9a9a" stroke-width="1"/><rect x="925.10" y="182.80" width="10.4" height="10" fill="#4c4cff"/><path d="M935.00 183.80V192.30H926.10" fill="none" stroke="#000" stroke-opacity="0.18" stroke-width="1"/><rect x="937.40" y="182.80" width="10.4" height="10" fill="#efefef"/><path d="M947.30 183.80V192.30H938.40" fill="none" stroke="#000" stroke-opacity="0.18" stroke-width="1"/><rect x="949.70" y="182.80" width="10.4" height="10" fill="#efefef"/><path d="M959.60 183.80V192.30H950.70" fill="none" stroke="#000" stroke-opacity="0.18" stroke-width="1"/><rect x="962.00" y="182.80" width="10.4" height="10" fill="#efefef"/><path d="M971.90 183.80V192.30H963.00" fill="none" stroke="#000" stroke-opacity="0.18" stroke-width="1"/><rect x="974.30" y="182.80" width="10.4" height="10" fill="#efefef"/><path d="M984.20 183.80V192.30H975.30" fill="none" stroke="#000" stroke-opacity="0.18" stroke-width="1"/><rect x="986.60" y="182.80" width="10.4" height="10" fill="#efefef"/><path d="M996.50 183.80V192.30H987.60" fill="none" stroke="#000" stroke-opacity="0.18" stroke-width="1"/><rect x="925.10" y="194.90" width="10.4" height="10" fill="#efefef"/><path d="M935.00 195.90V204.40H926.10" fill="none" stroke="#000" stroke-opacity="0.18" stroke-width="1"/><rect x="937.40" y="194.90" width="10.4" height="10" fill="#efefef"/><path d="M947.30 195.90V204.40H938.40" fill="none" stroke="#000" stroke-opacity="0.18" stroke-width="1"/><rect x="949.70" y="194.90" width="10.4" height="10" fill="#efefef"/><path d="M959.60 195.90V204.40H950.70" fill="none" stroke="#000" stroke-opacity="0.18" stroke-width="1"/><rect x="962.00" y="194.90" width="10.4" height="10" fill="#efefef"/><path d="M971.90 195.90V204.40H963.00" fill="none" stroke="#000" stroke-opacity="0.18" stroke-width="1"/><rect x="974.30" y="194.90" width="10.4" height="10" fill="#efefef"/><path d="M984.20 195.90V204.40H975.30" fill="none" stroke="#000" stroke-opacity="0.18" stroke-width="1"/><rect x="986.60" y="194.90" width="10.4" height="10" fill="#efefef"/><path d="M996.50 195.90V204.40H987.60" fill="none" stroke="#000" stroke-opacity="0.18" stroke-width="1"/><rect x="925.10" y="207.00" width="10.4" height="10" fill="#efefef"/><path d="M935.00 208.00V216.50H926.10" fill="none" stroke="#000" stroke-opacity="0.18" stroke-width="1"/><rect x="937.40" y="207.00" width="10.4" height="10" fill="#efefef"/><path d="M947.30 208.00V216.50H938.40" fill="none" stroke="#000" stroke-opacity="0.18" stroke-width="1"/><rect x="949.70" y="207.00" width="10.4" height="10" fill="#efefef"/><path d="M959.60 208.00V216.50H950.70" fill="none" stroke="#000" stroke-opacity="0.18" stroke-width="1"/><rect x="962.00" y="207.00" width="10.4" height="10" fill="#efefef"/><path d="M971.90 208.00V216.50H963.00" fill="none" stroke="#000" stroke-opacity="0.18" stroke-width="1"/><rect x="974.30" y="207.00" width="10.4" height="10" fill="#efefef"/><path d="M984.20 208.00V216.50H975.30" fill="none" stroke="#000" stroke-opacity="0.18" stroke-width="1"/><rect x="986.60" y="207.00" width="10.4" height="10" fill="#efefef"/><path d="M996.50 208.00V216.50H987.60" fill="none" stroke="#000" stroke-opacity="0.18" stroke-width="1"/><rect x="925.10" y="219.10" width="10.4" height="10" fill="#efefef"/><path d="M935.00 220.10V228.60H926.10" fill="none" stroke="#000" stroke-opacity="0.18" stroke-width="1"/><rect x="937.40" y="219.10" width="10.4" height="10" fill="#efefef"/><path d="M947.30 220.10V228.60H938.40" fill="none" stroke="#000" stroke-opacity="0.18" stroke-width="1"/><rect x="949.70" y="219.10" width="10.4" height="10" fill="#efefef"/><path d="M959.60 220.10V228.60H950.70" fill="none" stroke="#000" stroke-opacity="0.18" stroke-width="1"/><rect x="962.00" y="219.10" width="10.4" height="10" fill="#efefef"/><path d="M971.90 220.10V228.60H963.00" fill="none" stroke="#000" stroke-opacity="0.18" stroke-width="1"/><rect x="974.30" y="219.10" width="10.4" height="10" fill="#efefef"/><path d="M984.20 220.10V228.60H975.30" fill="none" stroke="#000" stroke-opacity="0.18" stroke-width="1"/><rect x="986.60" y="219.10" width="10.4" height="10" fill="#efefef"/><path d="M996.50 220.10V228.60H987.60" fill="none" stroke="#000" stroke-opacity="0.18" stroke-width="1"/><rect x="922.5" y="253.5" width="72" height="30" fill="#fff" stroke="#9a9a9a" stroke-width="1"/><rect x="925.30" y="255.60" width="11.8" height="12" fill="#4c4cff"/><path d="M936.60 256.60V267.10H926.30" fill="none" stroke="#000" stroke-opacity="0.18" stroke-width="1"/><rect x="939.20" y="255.60" width="11.8" height="12" fill="#efefef"/><path d="M950.50 256.60V267.10H940.20" fill="none" stroke="#000" stroke-opacity="0.18" stroke-width="1"/><rect x="953.10" y="255.60" width="11.8" height="12" fill="#efefef"/><path d="M964.40 256.60V267.10H954.10" fill="none" stroke="#000" stroke-opacity="0.18" stroke-width="1"/><rect x="967.00" y="255.60" width="11.8" height="12" fill="#efefef"/><path d="M978.30 256.60V267.10H968.00" fill="none" stroke="#000" stroke-opacity="0.18" stroke-width="1"/><rect x="980.90" y="255.60" width="11.8" height="12" fill="#efefef"/><path d="M992.20 256.60V267.10H981.90" fill="none" stroke="#000" stroke-opacity="0.18" stroke-width="1"/><rect x="925.30" y="269.30" width="11.8" height="12" fill="#efefef"/><path d="M936.60 270.30V280.80H926.30" fill="none" stroke="#000" stroke-opacity="0.18" stroke-width="1"/><rect x="939.20" y="269.30" width="11.8" height="12" fill="#efefef"/><path d="M950.50 270.30V280.80H940.20" fill="none" stroke="#000" stroke-opacity="0.18" stroke-width="1"/><rect x="953.10" y="269.30" width="11.8" height="12" fill="#efefef"/><path d="M964.40 270.30V280.80H954.10" fill="none" stroke="#000" stroke-opacity="0.18" stroke-width="1"/><rect x="967.00" y="269.30" width="11.8" height="12" fill="#efefef"/><path d="M978.30 270.30V280.80H968.00" fill="none" stroke="#000" stroke-opacity="0.18" stroke-width="1"/><rect x="980.90" y="269.30" width="11.8" height="12" fill="#efefef"/><path d="M992.20 270.30V280.80H981.90" fill="none" stroke="#000" stroke-opacity="0.18" stroke-width="1"/><rect x="923.5" y="286.5" width="17" height="13" fill="#e6e6e6" stroke="#cfcfcf" stroke-width="1"/><path d="M930.8 288.2H934.8V291H937.8V294.6H934.8V297.6H930.8V294.6H927.8V291H930.8Z" fill="#9cc0e6" stroke="#4f80bb" stroke-width="0.9"/><rect x="802" y="314.5" width="64.5" height="22" fill="#ff6600" stroke="#c8c8c8" stroke-width="1"/></svg>
<div class="t" style="left:922.8px;top:169.6px;font-size:10px;color:#222">Recent:</div>
<div class="t" style="left:922.6px;top:242.8px;font-size:10px;color:#222">Other:</div>
<div class="t sx" style="left:758px;top:320.5px;font-size:11px;color:#222">Preview:</div>
<div class="t sx" style="left:873px;top:320.5px;font-size:11px;color:#222;transform:scaleX(.9)">255, 102, 0 (#FF6600)</div>
</body></html>
